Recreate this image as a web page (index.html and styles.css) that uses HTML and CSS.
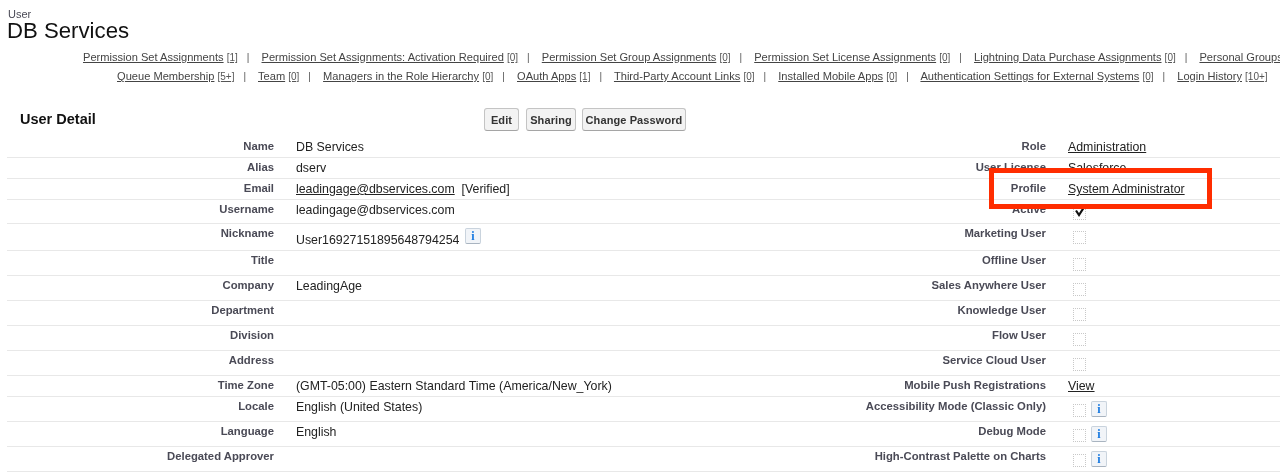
FILE: index.html
```html
<!DOCTYPE html>
<html lang="en">
<head>
<meta charset="utf-8">
<title>User: DB Services</title>
<link rel="stylesheet" href="styles.css">
</head>
<body>
<div class="page">
  <header class="page-head">
    <div class="crumb">User</div>
    <h1 class="title">DB Services</h1>
  </header>
  <nav class="links">
    <div class="link-line first">
      <span class="item"><a href="#">Permission Set Assignments</a> <small>[1]</small></span><span class="sep">|</span>
      <span class="item"><a href="#">Permission Set Assignments: Activation Required</a> <small>[0]</small></span><span class="sep">|</span>
      <span class="item"><a href="#">Permission Set Group Assignments</a> <small>[0]</small></span><span class="sep">|</span>
      <span class="item"><a href="#">Permission Set License Assignments</a> <small>[0]</small></span><span class="sep">|</span>
      <span class="item"><a href="#">Lightning Data Purchase Assignments</a> <small>[0]</small></span><span class="sep">|</span>
      <span class="item"><a href="#">Personal Groups</a> <small>[0]</small></span>
    </div>
    <div class="link-line second">
      <span class="item"><a href="#">Queue Membership</a> <small>[5+]</small></span><span class="sep">|</span>
      <span class="item"><a href="#">Team</a> <small>[0]</small></span><span class="sep">|</span>
      <span class="item"><a href="#">Managers in the Role Hierarchy</a> <small>[0]</small></span><span class="sep">|</span>
      <span class="item"><a href="#">OAuth Apps</a> <small>[1]</small></span><span class="sep">|</span>
      <span class="item"><a href="#">Third-Party Account Links</a> <small>[0]</small></span><span class="sep">|</span>
      <span class="item"><a href="#">Installed Mobile Apps</a> <small>[0]</small></span><span class="sep">|</span>
      <span class="item"><a href="#">Authentication Settings for External Systems</a> <small>[0]</small></span><span class="sep">|</span>
      <span class="item"><a href="#">Login History</a> <small>[10+]</small></span>
    </div>
  </nav>
  <section class="detail">
    <div class="detail-head">
      <h2 class="detail-title">User Detail</h2>
      <div class="buttons">
        <button class="btn btn-edit" type="button">Edit</button>
        <button class="btn btn-share" type="button">Sharing</button>
        <button class="btn btn-pass" type="button">Change Password</button>
      </div>
    </div>
    <div class="rows">
      <div class="row h21"><div class="lab">Name</div><div class="val">DB Services</div><div class="lab">Role</div><div class="val"><a href="#">Administration</a></div></div>
      <div class="row h21"><div class="lab">Alias</div><div class="val">dserv</div><div class="lab">User License</div><div class="val">Salesforce</div></div>
      <div class="row h21"><div class="lab">Email</div><div class="val"><a href="#">leadingage@dbservices.com</a>&nbsp; [Verified]</div><div class="lab">Profile</div><div class="val"><a href="#">System Administrator</a></div></div>
      <div class="row h24"><div class="lab">Username</div><div class="val">leadingage@dbservices.com</div><div class="lab">Active</div><div class="val"><span class="check on"><svg viewBox="0 0 12 12" class="tick"><path d="M2 5.5 5 10 10.5 1.5" /></svg></span></div></div>
      <div class="row h27"><div class="lab">Nickname</div><div class="val nick">User16927151895648794254 <span class="info">i</span></div><div class="lab">Marketing User</div><div class="val"><span class="check"></span></div></div>
      <div class="row h25"><div class="lab">Title</div><div class="val"></div><div class="lab">Offline User</div><div class="val"><span class="check"></span></div></div>
      <div class="row h25"><div class="lab">Company</div><div class="val">LeadingAge</div><div class="lab">Sales Anywhere User</div><div class="val"><span class="check"></span></div></div>
      <div class="row h25"><div class="lab">Department</div><div class="val"></div><div class="lab">Knowledge User</div><div class="val"><span class="check"></span></div></div>
      <div class="row h25"><div class="lab">Division</div><div class="val"></div><div class="lab">Flow User</div><div class="val"><span class="check"></span></div></div>
      <div class="row h25"><div class="lab">Address</div><div class="val"></div><div class="lab">Service Cloud User</div><div class="val"><span class="check"></span></div></div>
      <div class="row h21"><div class="lab">Time Zone</div><div class="val">(GMT-05:00) Eastern Standard Time (America/New_York)</div><div class="lab">Mobile Push Registrations</div><div class="val"><a href="#">View</a></div></div>
      <div class="row h25"><div class="lab">Locale</div><div class="val">English (United States)</div><div class="lab">Accessibility Mode (Classic Only)</div><div class="val"><span class="check"></span><span class="info">i</span></div></div>
      <div class="row h25"><div class="lab">Language</div><div class="val">English</div><div class="lab">Debug Mode</div><div class="val"><span class="check"></span><span class="info">i</span></div></div>
      <div class="row h25"><div class="lab">Delegated Approver</div><div class="val"></div><div class="lab">High-Contrast Palette on Charts</div><div class="val"><span class="check"></span><span class="info">i</span></div></div>
    </div>
  </section>
  <div class="callout"></div>
</div>
</body>
</html>
```
FILE: styles.css
```css
html, body { margin: 0; padding: 0; background: #fff; }
body { width: 1280px; height: 474px; overflow: hidden; font-family: "Liberation Sans", Arial, sans-serif; color: #222; }
.page { position: relative; width: 1280px; height: 474px; overflow: hidden; filter: blur(0.35px); }
a { color: #222; text-decoration: underline; }

.page-head { padding: 8px 0 0 7px; }
.crumb { font-size: 11px; line-height: 12px; color: #4a4a56; padding-left: 1px; }
.title { margin: -1px 0 0; font-size: 22.2px; line-height: 24px; font-weight: 400; color: #111; }

.links { padding-top: 5px; font-size: 11.1px; color: #444; }
.link-line { white-space: nowrap; line-height: 19px; }
.first { padding-left: 83px; }
.second { padding-left: 117px; }
.link-line a { color: #444; }
.link-line small { font-size: 10px; line-height: 1; color: #555; text-decoration: underline; }
.sep { margin: 0 9px; font-size: 10px; line-height: 1; color: #555; }

.detail { padding: 0 0 0 7px; }
.detail-head { display: flex; height: 29px; padding-top: 22px; }
.detail-title { margin: 3px 0 0 13px; width: 464px; font-size: 14.5px; line-height: 17px; font-weight: 700; color: #111; }
.buttons { display: flex; gap: 7px; height: 23px; }
.btn { box-sizing: border-box; height: 23px; padding: 0; font: 700 11px "Liberation Sans", Arial, sans-serif; color: #333; background: #f3f3f3; border: 1px solid #c4c4c4; border-bottom-color: #a5a5a5; border-radius: 3px; letter-spacing: 0.1px; }
.btn-edit { width: 35px; }
.btn-share { width: 50px; }
.btn-pass { width: 104px; margin-left: -1px; }

.row { display: grid; grid-template-columns: 267px 340px 432px 1fr; box-sizing: border-box; border-bottom: 1px solid #e8e8e8; }
.h21 { height: 21px; }
.h24 { height: 24px; }
.h25 { height: 25px; }
.h27 { height: 27px; }
.lab { text-align: right; font-size: 11.3px; line-height: 13px; font-weight: 700; color: #4a4a56; padding-top: 3px; white-space: nowrap; }
.val { padding: 3px 0 0 22px; font-size: 12.35px; line-height: 14px; color: #222; white-space: nowrap; display: block; }
.nick { padding-top: 9px; }

.check { display: inline-block; box-sizing: border-box; width: 13px; height: 13px; margin: 4px 0 0 5px; border: 1px dotted #c8c8c8; vertical-align: top; position: relative; }
.tick { position: absolute; left: 0; top: -3px; width: 12px; height: 12px; fill: none; stroke: #111; stroke-width: 2.2; }
.info { display: inline-block; box-sizing: border-box; width: 16px; height: 16px; margin: 1px 0 0 5px; border: 1px solid #c9d3dd; border-bottom-color: #a9b4c0; border-radius: 2px; background: #f1f4f8; font: 700 12px/14px "Liberation Serif", serif; color: #1a7ae0; text-align: center; vertical-align: top; }
.nick .info { margin: -5px 0 0 2px; }

.callout { position: absolute; left: 989px; top: 168px; width: 223px; height: 41px; box-sizing: border-box; border: 5px solid #ff2d00; }
```
